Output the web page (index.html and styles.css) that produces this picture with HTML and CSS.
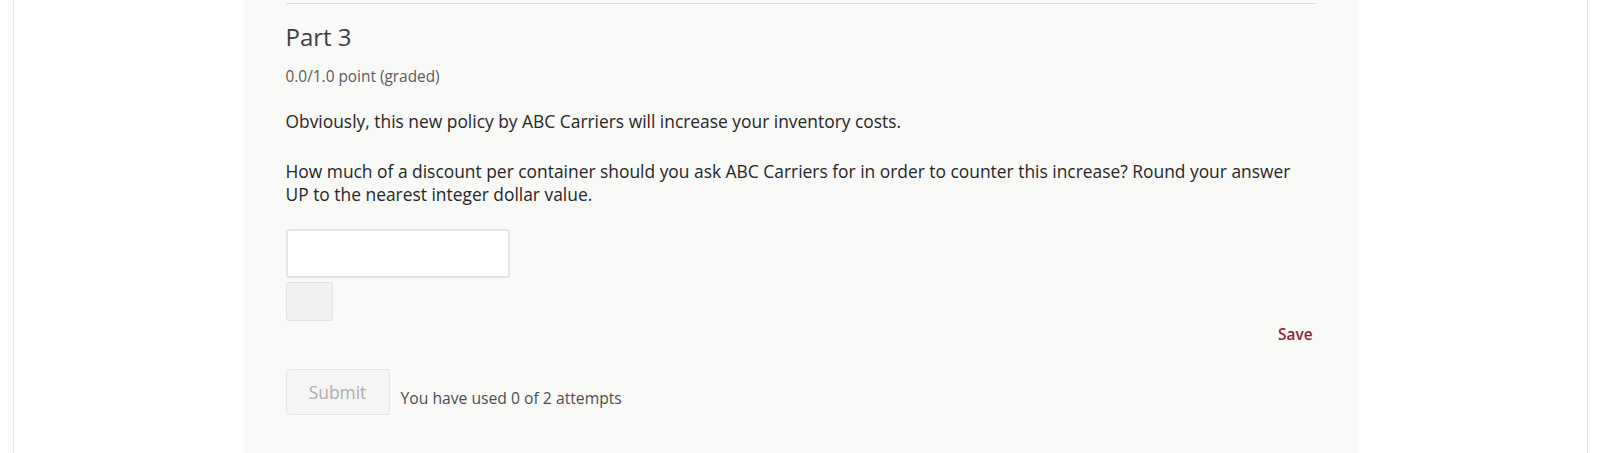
FILE: index.html
```html
<!DOCTYPE html>
<html lang="en">
<head>
<meta charset="utf-8">
<title>Part 3</title>
<link rel="stylesheet" href="styles.css">
</head>
<body>
<div class="page">
  <div class="panel">
    <div class="divider"></div>
    <h3 class="title">Part 3</h3>
    <div class="points">0.0/1.0 point (graded)</div>
    <p class="text first">Obviously, this new policy by ABC Carriers will increase your inventory costs.</p>
    <p class="text">How much of a discount per container should you ask ABC Carriers for in order to counter this increase? Round your answer UP to the nearest integer dollar value.</p>
    <input class="answer" type="text" aria-label="answer">
    <div class="status-box"></div>
    <div class="save-row"><span class="save">Save</span></div>
    <div class="submit-row">
      <button class="submit" type="button" disabled>Submit</button>
      <span class="attempts">You have used 0 of 2 attempts</span>
    </div>
  </div>
</div>
</body>
</html>
```
FILE: styles.css
```css
html, body {
  margin: 0;
  padding: 0;
  background: #ffffff;
}
body {
  font-family: "Open Sans", "Noto Sans", sans-serif;
  color: #313131;
}
.page {
  margin: 0 12px 0 13px;
  height: 453px;
  border-left: 1px solid #e7e7e7;
  border-right: 1px solid #e7e7e7;
  display: flex;
  justify-content: center;
  overflow: hidden;
}
.panel {
  width: 1114px;
  flex: none;
  box-sizing: border-box;
  padding: 3px 43px 0 42px;
  background: #f9f9f8;
  display: flex;
  flex-direction: column;
  align-items: flex-start;
}
.divider {
  align-self: stretch;
  height: 0;
  border-top: 1px solid #dddddd;
}
.title {
  margin: 18px 0 0;
  font-size: 24px;
  line-height: 29px;
  font-weight: 400;
  color: #3f3f3f;
}
.points {
  margin-top: 16px;
  font-size: 15.4px;
  line-height: 20px;
  color: #5b5b5b;
}
.text {
  margin: 0;
  font-size: 17.4px;
  line-height: 23px;
  color: #262626;
}
.text.first {
  margin-top: 23px;
}
.text + .text {
  margin-top: 27px;
}
.answer {
  margin: 23px 0 0;
  width: 224px;
  height: 49px;
  box-sizing: border-box;
  border: 2px solid #e3e3e3;
  border-radius: 3px;
  background: #ffffff;
  padding: 0 8px;
  font-family: inherit;
  font-size: 17.4px;
}
.status-box {
  margin-top: 4px;
  width: 47px;
  height: 39px;
  box-sizing: border-box;
  border: 1px solid #e2e2e2;
  border-radius: 3px;
  background: #f0f0f0;
}
.save-row {
  align-self: stretch;
  display: flex;
  justify-content: flex-end;
  margin-top: 4px;
  padding-right: 2px;
}
.save {
  font-size: 15.4px;
  line-height: 20px;
  font-weight: 600;
  color: #98213a;
}
.submit-row {
  display: flex;
  align-items: flex-end;
  gap: 11px;
  margin-top: 24px;
}
.submit {
  width: 104px;
  height: 46px;
  box-sizing: border-box;
  border: 1px solid #e4e4e4;
  border-radius: 3px;
  background: #f5f5f5;
  color: #adadad;
  font-family: inherit;
  font-size: 17.4px;
  padding: 0;
}
.attempts {
  font-size: 15.7px;
  line-height: 20px;
  color: #4d4d4d;
  padding-bottom: 7px;
}
```
